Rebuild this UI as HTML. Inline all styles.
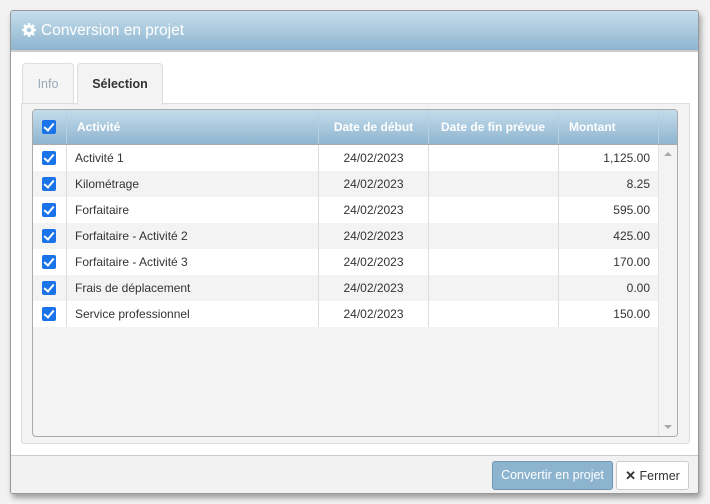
<!DOCTYPE html>
<html><head><meta charset="utf-8"><style>
*{box-sizing:border-box;margin:0;padding:0}
body{width:710px;height:504px;background:#f2f2f2;font-family:"Liberation Sans",sans-serif;position:relative;overflow:hidden;font-size:12px;color:#333}
.dlg{position:absolute;left:10px;top:10px;width:689px;height:484px;background:#fff;border:1px solid #999;border-radius:3px;box-shadow:2px 4px 6px rgba(0,0,0,.35);overflow:hidden}
.hd{height:41px;background:linear-gradient(#c6deec,#8db4cf);border-bottom:2px solid #ccc;color:#fff;font-size:15.5px;line-height:40px;padding-left:11px}
.hd svg{vertical-align:-2px;margin-right:5px}
.tab{position:absolute;top:52px;height:41px;border:1px solid #ddd;border-bottom:none;border-radius:4px 4px 0 0;line-height:40px;text-align:center;font-size:12.5px}
.panel{position:absolute;left:10px;top:92px;width:669px;height:341px;background:#f3f3f3;border:1px solid #ddd;border-radius:0 0 3px 3px}
.grid{position:absolute;left:10px;top:5px;width:646px;height:328px;border:1px solid #aaa;border-radius:4px;overflow:hidden;background:#f3f3f3}
.gh{height:35px;background:linear-gradient(#c4dceb,#8fb5d0);display:flex;color:#fff;font-weight:bold;font-size:12px;line-height:34px;border-bottom:1px solid #aaa}
.gh div,.r div{border-right:1px solid #ddd;flex:none}
.gh div{border-right-color:#b8cfe0}
.r{height:26px;display:flex;line-height:26px;background:#fff}
.r:nth-child(even){background:#f3f3f3}
.c0{width:34px;position:relative}.c1{width:252px;padding-left:8px}.c2{width:110px;text-align:center}.c3{width:130px;padding-left:12px}.c4{width:100px;padding-right:8px;text-align:right}
.gh .c4{text-align:left;padding-left:10px}
.cb{position:absolute;left:9px;top:6px;width:14px;height:14px;background:#1a73e8;border-radius:2px}
.cb:after{content:"";position:absolute;left:4px;top:1px;width:4px;height:8px;border:solid #fff;border-width:0 2px 2px 0;transform:rotate(40deg)}
.gh .cb{top:10px}
.sb{position:absolute;right:0;top:35px;width:19px;bottom:0;background:#f3f3f3;border-left:1px solid #e4e4e4}
.ft{position:absolute;left:0;top:444px;width:100%;height:40px;background:#f2f2f2;border-top:1px solid #ccc}
.btn{position:absolute;top:5px;height:29px;border-radius:3px;line-height:27px;font-size:12.5px;text-align:center}
</style></head><body>
<div class="dlg">
<div class="hd"><svg width="14" height="14" viewBox="0 0 16 16"><path fill="#fff" d="M6.8 0h2.4l.4 2.2 1.3.6 1.9-1.3 1.7 1.7-1.3 1.9.6 1.3 2.2.4v2.4l-2.2.4-.6 1.3 1.3 1.9-1.7 1.7-1.9-1.3-1.3.6-.4 2.2H6.8l-.4-2.2-1.3-.6-1.9 1.3-1.7-1.7 1.3-1.9-.6-1.3L0 9.2V6.8l2.2-.4.6-1.3-1.3-1.9 1.7-1.7 1.9 1.3 1.3-.6zM8 5.3a2.7 2.7 0 1 0 0 5.4 2.7 2.7 0 0 0 0-5.4z"/></svg>Conversion en projet</div>
<div class="tab" style="left:11px;width:52px;background:#f5f5f5;color:#9ab;">Info</div>
<div class="tab" style="left:66px;width:86px;background:#f3f3f3;font-weight:bold;z-index:2;height:42px">Sélection</div>
<div class="panel"><div class="grid">
<div class="gh"><div class="c0"><span class="cb"></span></div><div class="c1" style="padding-left:10px">Activité</div><div class="c2">Date de début</div><div class="c3">Date de fin prévue</div><div class="c4">Montant</div></div>
<div>
<div class="r"><div class="c0"><span class="cb"></span></div><div class="c1">Activité 1</div><div class="c2">24/02/2023</div><div class="c3"></div><div class="c4">1,125.00</div></div>
<div class="r"><div class="c0"><span class="cb"></span></div><div class="c1">Kilométrage</div><div class="c2">24/02/2023</div><div class="c3"></div><div class="c4">8.25</div></div>
<div class="r"><div class="c0"><span class="cb"></span></div><div class="c1">Forfaitaire</div><div class="c2">24/02/2023</div><div class="c3"></div><div class="c4">595.00</div></div>
<div class="r"><div class="c0"><span class="cb"></span></div><div class="c1">Forfaitaire - Activité 2</div><div class="c2">24/02/2023</div><div class="c3"></div><div class="c4">425.00</div></div>
<div class="r"><div class="c0"><span class="cb"></span></div><div class="c1">Forfaitaire - Activité 3</div><div class="c2">24/02/2023</div><div class="c3"></div><div class="c4">170.00</div></div>
<div class="r"><div class="c0"><span class="cb"></span></div><div class="c1">Frais de déplacement</div><div class="c2">24/02/2023</div><div class="c3"></div><div class="c4">0.00</div></div>
<div class="r"><div class="c0"><span class="cb"></span></div><div class="c1">Service professionnel</div><div class="c2">24/02/2023</div><div class="c3"></div><div class="c4">150.00</div></div>
</div>
<div class="sb"><div style="position:absolute;left:5px;top:7px;border:4px solid transparent;border-bottom-color:#aaa;border-top:0"></div><div style="position:absolute;left:5px;bottom:7px;border:4px solid transparent;border-top-color:#aaa;border-bottom:0"></div></div>
</div></div>
<div class="ft">
<div class="btn" style="left:481px;width:121px;background:#8db4cf;border:1px solid #6f97b3;color:#fff">Convertir en projet</div>
<div class="btn" style="left:605px;width:73px;background:#fff;border:1px solid #ccc;color:#333"><b style="font-size:13px">✕</b> Fermer</div>
</div>
</div>
</body></html>
